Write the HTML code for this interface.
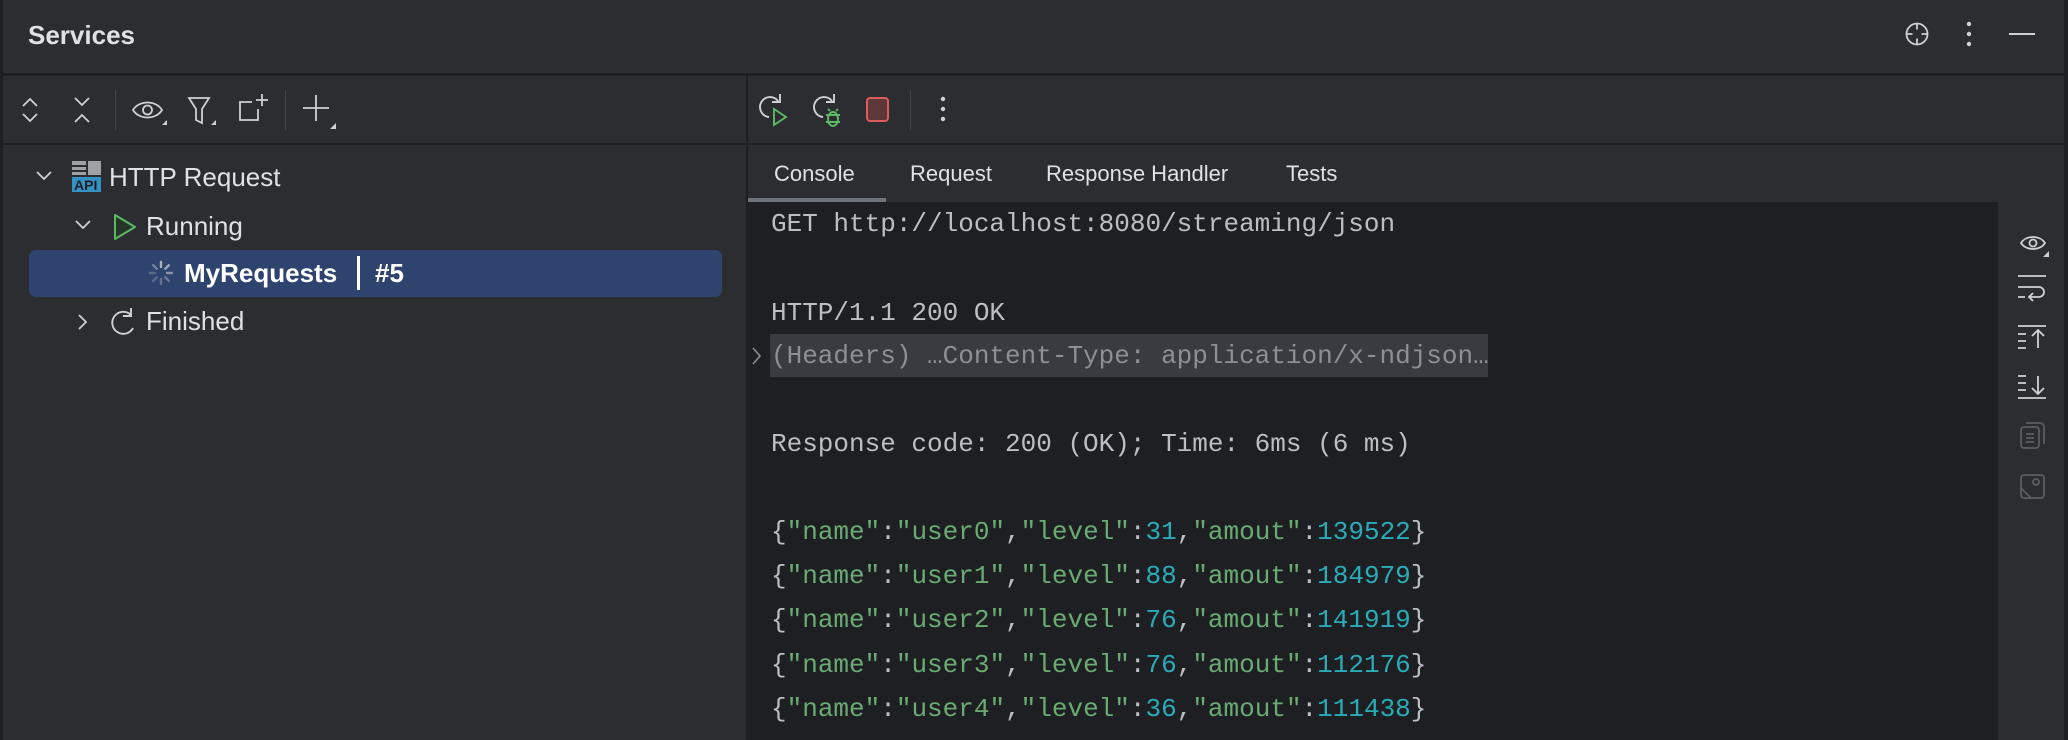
<!DOCTYPE html>
<html><head><meta charset="utf-8"><style>
*{margin:0;padding:0;box-sizing:border-box}
body{width:2068px;height:740px;background:#2b2d30;position:relative;overflow:hidden;font-family:"Liberation Sans",sans-serif;color:#dfe1e5}
.a{position:absolute}
.t{position:absolute;white-space:nowrap}
svg{position:absolute;overflow:visible}
.mono{font-family:"Liberation Mono",monospace;font-size:26px;white-space:pre;position:absolute;left:771px;color:#bcbec4}
.g{color:#6aab73}.n{color:#2aacb8}
</style></head><body>
<div class="a" style="left:0;top:0;width:3px;height:740px;background:#1e1f22"></div>
<div class="a" style="left:2064px;top:0;width:4px;height:740px;background:#1e1f22"></div>
<div class="t" style="left:28px;top:20px;font-size:26px;font-weight:bold">Services</div>
<!-- header icons -->
<svg style="left:1905px;top:22px" width="24" height="24" viewBox="0 0 24 24" fill="none" stroke="#ced0d6" stroke-width="1.8"><circle cx="12" cy="12" r="10.5"/><path d="M12 1.5v6M12 16.5v6M1.5 12h6M16.5 12h6"/></svg>
<svg style="left:1966px;top:21px" width="6" height="26"><circle cx="3" cy="3" r="2.2" fill="#ced0d6"/><circle cx="3" cy="13" r="2.2" fill="#ced0d6"/><circle cx="3" cy="23" r="2.2" fill="#ced0d6"/></svg>
<div class="a" style="left:2009px;top:33px;width:26px;height:2px;background:#ced0d6"></div>
<div class="a" style="left:3px;top:73px;width:2061px;height:3px;background:#1e1f22"></div>
<!-- left/right divider -->
<div class="a" style="left:746px;top:76px;width:2px;height:664px;background:#1e1f22"></div>
<div class="a" style="left:3px;top:143px;width:743px;height:2px;background:#1e1f22"></div>
<div class="a" style="left:748px;top:143px;width:1316px;height:2px;background:#1e1f22"></div>
<!-- left toolbar -->
<svg style="left:22px;top:97px" width="16" height="26" fill="none" stroke="#ced0d6" stroke-width="1.8"><path d="M1 9l7-7 7 7M1 17l7 7 7-7"/></svg>
<svg style="left:74px;top:97px" width="16" height="26" fill="none" stroke="#ced0d6" stroke-width="1.8"><path d="M1 1l7 7 7-7M1 25l7-7 7 7"/></svg>
<div class="a" style="left:115px;top:90px;width:1px;height:40px;background:#43454a"></div>
<svg style="left:132px;top:98px" width="36" height="30" fill="none" stroke="#ced0d6" stroke-width="1.8"><path d="M1 12C7 2 24 2 30 12 24 22 7 22 1 12z"/><circle cx="15.5" cy="12" r="4.5"/><path d="M30 27h5v-5z" fill="#ced0d6" stroke="none"/></svg>
<svg style="left:188px;top:97px" width="30" height="30" fill="none" stroke="#ced0d6" stroke-width="1.8"><path d="M1 1h20l-7 11v14l-6-3V12z"/><path d="M23 28h5v-5z" fill="#ced0d6" stroke="none"/></svg>
<svg style="left:238px;top:93px" width="32" height="32" fill="none" stroke="#ced0d6" stroke-width="1.8"><path d="M14 9H2v18h18V16"/><path d="M24 1v12M18 7h12"/></svg>
<div class="a" style="left:285px;top:90px;width:1px;height:40px;background:#43454a"></div>
<svg style="left:303px;top:95px" width="34" height="34" fill="none" stroke="#ced0d6" stroke-width="1.8"><path d="M13 0v26M0 13h26"/><path d="M27 34h6v-6z" fill="#ced0d6" stroke="none"/></svg>
<!-- tree -->
<svg style="left:36px;top:171px" width="16" height="10" fill="none" stroke="#ced0d6" stroke-width="1.8"><path d="M1 1l7 7 7-7"/></svg>
<svg style="left:72px;top:161px" width="31" height="31"><rect x="0" y="0" width="14" height="4" fill="#9ea2a8"/><rect x="0" y="6" width="14" height="3" fill="#9ea2a8"/><rect x="0" y="11" width="14" height="3" fill="#9ea2a8"/><rect x="16" y="0" width="13" height="14" fill="#9ea2a8"/><rect x="0" y="16" width="29" height="15" fill="#3592c4"/><text x="2" y="29" font-family="Liberation Sans" font-size="14" font-weight="bold" fill="#1e1f22">API</text></svg>
<div class="t" style="left:109px;top:162px;font-size:26px">HTTP Request</div>
<svg style="left:75px;top:220px" width="16" height="10" fill="none" stroke="#ced0d6" stroke-width="1.8"><path d="M1 1l7 7 7-7"/></svg>
<svg style="left:113px;top:213px" width="24" height="28"><path d="M2 2l20 12L2 26z" fill="#253627" stroke="#5fb865" stroke-width="2" stroke-linejoin="round"/></svg>
<div class="t" style="left:146px;top:211px;font-size:26px">Running</div>
<div class="a" style="left:29px;top:250px;width:693px;height:47px;background:#2e436e;border-radius:7px"></div>
<svg style="left:148px;top:260px" width="26" height="26" stroke="#8a94a6" stroke-width="2.4" stroke-linecap="round"><path d="M13 2v5" stroke="#aab2c0"/><path d="M20.8 5.2l-3.5 3.5" stroke="#a0a8b6"/><path d="M24 13h-5"/><path d="M20.8 20.8l-3.5-3.5" opacity=".7"/><path d="M13 24v-5" opacity=".6"/><path d="M5.2 20.8l3.5-3.5" opacity=".5"/><path d="M2 13h5" opacity=".5"/><path d="M5.2 5.2l3.5 3.5" opacity=".8"/></svg>
<div class="t" style="left:184px;top:258px;font-size:26px;font-weight:bold;color:#fff">MyRequests</div>
<div class="a" style="left:357px;top:256px;width:3px;height:34px;background:#fff"></div>
<div class="t" style="left:375px;top:258px;font-size:26px;font-weight:bold;color:#fff">#5</div>
<svg style="left:78px;top:314px" width="10" height="16" fill="none" stroke="#ced0d6" stroke-width="1.8"><path d="M1 1l7 7-7 7"/></svg>
<svg style="left:111px;top:307px" width="26" height="30" fill="none" stroke="#ced0d6" stroke-width="1.9"><path d="M20 8A11 11 0 1 0 22 21"/><path d="M20 1v8h-8"/></svg>
<div class="t" style="left:146px;top:306px;font-size:26px">Finished</div>
<!-- right toolbar -->
<svg style="left:759px;top:94px" width="34" height="34" fill="none" stroke-width="1.9"><path d="M19 7A10 10 0 1 0 10 23" stroke="#ced0d6"/><path d="M21 0v8h-8" stroke="#ced0d6"/><path d="M15 15l12 8-12 8z" stroke="#5fb865"/></svg>
<svg style="left:813px;top:94px" width="34" height="34" fill="none" stroke-width="1.9"><path d="M19 7A10 10 0 1 0 10 23" stroke="#ced0d6"/><path d="M21 0v8h-8" stroke="#ced0d6"/><ellipse cx="20" cy="25" rx="5" ry="7" stroke="#5fb865"/><path d="M13 21h14M13 28h14M17 17l-2-2M23 17l2-2" stroke="#5fb865"/></svg>
<div class="a" style="left:866px;top:97px;width:23px;height:25px;background:#5e3838;border:2.2px solid #db5c5c;border-radius:4px"></div>
<div class="a" style="left:910px;top:90px;width:1px;height:40px;background:#43454a"></div>
<svg style="left:940px;top:96px" width="6" height="26"><circle cx="3" cy="3" r="2.2" fill="#ced0d6"/><circle cx="3" cy="13" r="2.2" fill="#ced0d6"/><circle cx="3" cy="23" r="2.2" fill="#ced0d6"/></svg>
<!-- tabs -->
<div class="t" style="left:774px;top:161px;font-size:22px">Console</div>
<div class="t" style="left:910px;top:161px;font-size:22px">Request</div>
<div class="t" style="left:1046px;top:161px;font-size:22px">Response Handler</div>
<div class="t" style="left:1286px;top:161px;font-size:22px">Tests</div>
<div class="a" style="left:748px;top:198px;width:138px;height:4px;background:#6f737a"></div>
<!-- console -->
<div class="a" style="left:748px;top:202px;width:1250px;height:538px;background:#1e1f22"></div>
<div class="a" style="left:1998px;top:202px;width:66px;height:538px;background:#2b2d30"></div>
<div class="a" style="left:770px;top:334px;width:718px;height:43px;background:#393b40"></div>
<svg style="left:752px;top:347px" width="10" height="18" fill="none" stroke="#8c8f94" stroke-width="1.6"><path d="M1 1l7 8-7 8"/></svg>
<div class="mono" style="top:209px">GET http://localhost:8080/streaming/json</div>
<div class="mono" style="top:298px">HTTP/1.1 200 OK</div>
<div class="mono" style="top:341px;color:#8c8f94">(Headers) …Content-Type: application/x-ndjson…</div>
<div class="mono" style="top:429px">Response code: 200 (OK); Time: 6ms (6 ms)</div>
<div class="mono" style="top:517px">{<span class="g">"name"</span>:<span class="g">"user0"</span>,<span class="g">"level"</span>:<span class="n">31</span>,<span class="g">"amout"</span>:<span class="n">139522</span>}</div>
<div class="mono" style="top:561px">{<span class="g">"name"</span>:<span class="g">"user1"</span>,<span class="g">"level"</span>:<span class="n">88</span>,<span class="g">"amout"</span>:<span class="n">184979</span>}</div>
<div class="mono" style="top:605px">{<span class="g">"name"</span>:<span class="g">"user2"</span>,<span class="g">"level"</span>:<span class="n">76</span>,<span class="g">"amout"</span>:<span class="n">141919</span>}</div>
<div class="mono" style="top:650px">{<span class="g">"name"</span>:<span class="g">"user3"</span>,<span class="g">"level"</span>:<span class="n">76</span>,<span class="g">"amout"</span>:<span class="n">112176</span>}</div>
<div class="mono" style="top:694px">{<span class="g">"name"</span>:<span class="g">"user4"</span>,<span class="g">"level"</span>:<span class="n">36</span>,<span class="g">"amout"</span>:<span class="n">111438</span>}</div>
<!-- gutter icons -->
<svg style="left:2020px;top:234px" width="30" height="24" fill="none" stroke="#ced0d6" stroke-width="1.8"><path d="M1 9C6 1 20 1 25 9 20 17 6 17 1 9z"/><circle cx="13" cy="9" r="3.5"/><path d="M23 23h6v-6z" fill="#ced0d6" stroke="none"/></svg>
<svg style="left:2018px;top:275px" width="30" height="24" fill="none" stroke="#ced0d6" stroke-width="1.8"><path d="M0 1h28M0 12h21a5 5 0 0 1 0 10H12M15 18l-4 4 4 4M0 22h7"/></svg>
<svg style="left:2018px;top:325px" width="30" height="24" fill="none" stroke="#ced0d6" stroke-width="1.8"><path d="M0 1h28M0 9h8M0 16h8M0 23h8M20 23V5M14 11l6-6 6 6"/></svg>
<svg style="left:2018px;top:375px" width="30" height="24" fill="none" stroke="#ced0d6" stroke-width="1.8"><path d="M0 1h8M0 8h8M0 15h8M0 23h28M20 1v18M14 13l6 6 6-6"/></svg>
<svg style="left:2020px;top:422px" width="26" height="28" fill="none" stroke="#5a5d63" stroke-width="1.8"><rect x="1" y="5" width="18" height="21" rx="3"/><path d="M6 1h14a4 4 0 0 1 4 4v17M6 12h8M6 16h8M6 20h8"/></svg>
<svg style="left:2020px;top:474px" width="26" height="26" fill="none" stroke="#5a5d63" stroke-width="1.8"><rect x="1" y="1" width="23" height="23" rx="3"/><circle cx="16" cy="8" r="3"/><path d="M1 14l10 10"/></svg>
</body></html>
